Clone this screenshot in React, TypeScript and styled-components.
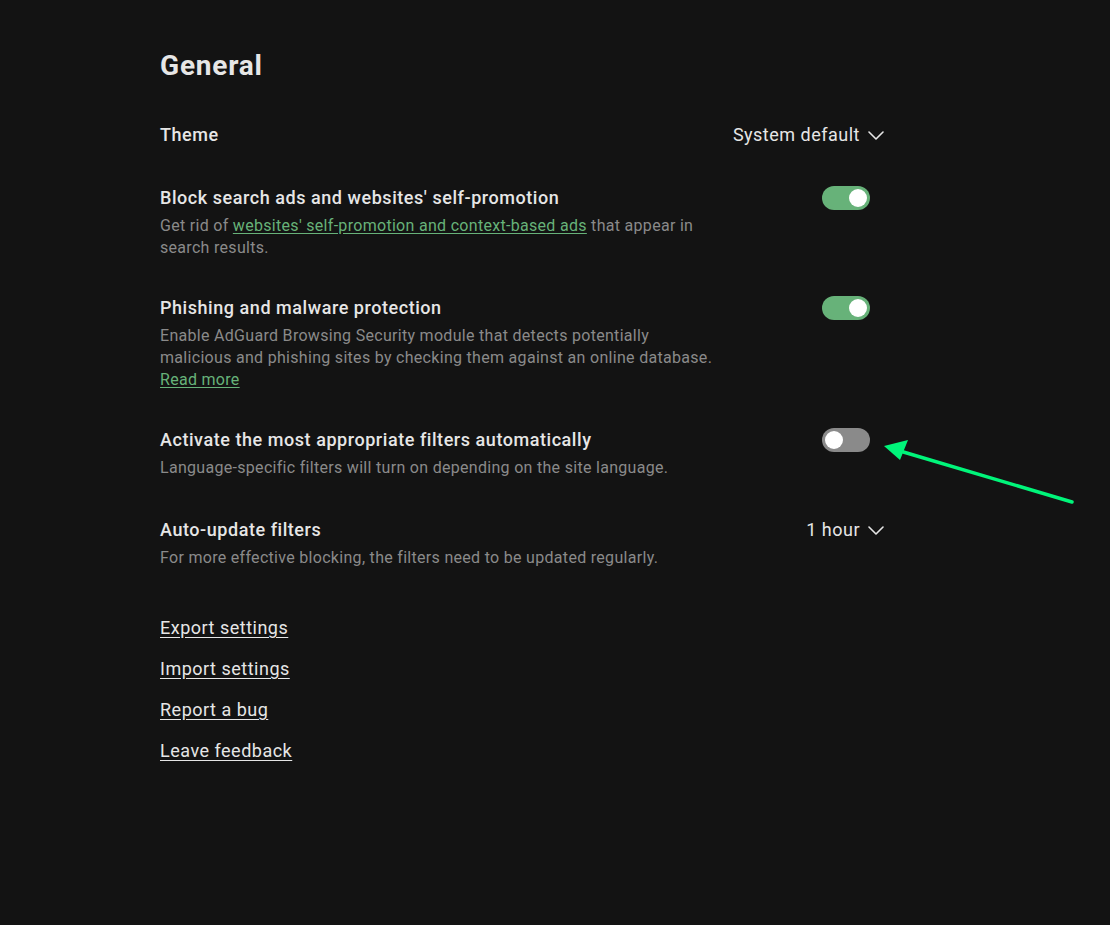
import React, { useState } from "react";
import styled, { createGlobalStyle } from "styled-components";

const GlobalStyle = createGlobalStyle`
  html, body {
    margin: 0;
    padding: 0;
    background: #131313;
  }
  body {
    font-family: Roboto, "Liberation Sans", Arial, sans-serif;
    color: #e3e3e3;
  }
`;

const Page = styled.div`
  position: relative;
  min-height: 925px;
  padding: 48px 0 0 160px;
  box-sizing: border-box;
`;

const Content = styled.div`
  width: 724px;
  display: flex;
  flex-direction: column;
`;

const Title = styled.h1`
  margin: 0 0 39px;
  font-size: 28px;
  line-height: 36px;
  font-weight: 700;
  letter-spacing: 0.8px;
  color: #e6e6e6;
`;

const Row = styled.div<{ $gap?: number }>`
  display: flex;
  justify-content: space-between;
  align-items: flex-start;
  margin-bottom: ${({ $gap }) => $gap ?? 37}px;
`;

const TextCol = styled.div`
  width: 558px;
  display: flex;
  flex-direction: column;
`;

const RowTitle = styled.div`
  font-size: 18px;
  line-height: 24px;
  font-weight: 500;
  letter-spacing: 0.55px;
  color: #e6e6e6;
`;

const Desc = styled.div`
  margin-top: 5px;
  font-size: 16px;
  line-height: 22px;
  letter-spacing: 0.3px;
  color: #8a8a8a;
`;

const GreenLink = styled.a`
  color: #67b279;
  text-decoration: underline;
  text-underline-offset: 2px;
  cursor: pointer;
`;

const SelectBtn = styled.button`
  display: flex;
  align-items: center;
  gap: 8px;
  padding: 0;
  border: none;
  background: none;
  font-family: inherit;
  font-size: 18px;
  line-height: 24px;
  letter-spacing: 0.5px;
  color: #e6e6e6;
  cursor: pointer;
`;

const ToggleTrack = styled.button<{ $on: boolean }>`
  position: relative;
  width: 48px;
  height: 24px;
  margin-right: 14px;
  padding: 0;
  border: none;
  border-radius: 12px;
  background: ${({ $on }) => ($on ? "#67b279" : "#8a8a8a")};
  cursor: pointer;
  flex-shrink: 0;
`;

const Knob = styled.span<{ $on: boolean }>`
  position: absolute;
  top: 3px;
  left: ${({ $on }) => ($on ? "27px" : "3px")};
  width: 18px;
  height: 18px;
  border-radius: 50%;
  background: #fff;
`;

const Links = styled.div`
  display: flex;
  flex-direction: column;
  align-items: flex-start;
  gap: 17px;
  margin-top: 10px;
`;

const PlainLink = styled.a`
  font-size: 18px;
  line-height: 24px;
  letter-spacing: 0.5px;
  color: #e6e6e6;
  text-decoration: underline;
  text-underline-offset: 3px;
  cursor: pointer;
`;

const Arrow = styled.svg`
  position: absolute;
  left: 880px;
  top: 438px;
  pointer-events: none;
`;

const Chevron = () => (
  <svg width="16" height="9" viewBox="0 0 16 9" fill="none">
    <path d="M1 1l7 7 7-7" stroke="#e6e6e6" strokeWidth="1.6" strokeLinecap="round" strokeLinejoin="round" />
  </svg>
);

const Toggle: React.FC<{ initial: boolean }> = ({ initial }) => {
  const [on, setOn] = useState(initial);
  return (
    <ToggleTrack $on={on} onClick={() => setOn(!on)}>
      <Knob $on={on} />
    </ToggleTrack>
  );
};

const App: React.FC = () => {
  return (
    <Page>
      <GlobalStyle />
      <Content>
        <Title>General</Title>
        <Row $gap={39}>
          <RowTitle>Theme</RowTitle>
          <SelectBtn>
            System default <Chevron />
          </SelectBtn>
        </Row>
        <Row>
          <TextCol>
            <RowTitle>Block search ads and websites' self-promotion</RowTitle>
            <Desc>
              Get rid of <GreenLink>websites' self-promotion and context-based ads</GreenLink> that appear in search results.
            </Desc>
          </TextCol>
          <Toggle initial={true} />
        </Row>
        <Row>
          <TextCol>
            <RowTitle>Phishing and malware protection</RowTitle>
            <Desc>
              Enable AdGuard Browsing Security module that detects potentially malicious and phishing sites by checking them against an online database.
              <br />
              <GreenLink>Read more</GreenLink>
            </Desc>
          </TextCol>
          <Toggle initial={true} />
        </Row>
        <Row $gap={39}>
          <TextCol>
            <RowTitle>Activate the most appropriate filters automatically</RowTitle>
            <Desc>Language-specific filters will turn on depending on the site language.</Desc>
          </TextCol>
          <Toggle initial={false} />
        </Row>
        <Row>
          <TextCol>
            <RowTitle>Auto-update filters</RowTitle>
            <Desc>For more effective blocking, the filters need to be updated regularly.</Desc>
          </TextCol>
          <SelectBtn>
            1 hour <Chevron />
          </SelectBtn>
        </Row>
        <Links>
          <PlainLink>Export settings</PlainLink>
          <PlainLink>Import settings</PlainLink>
          <PlainLink>Report a bug</PlainLink>
          <PlainLink>Leave feedback</PlainLink>
        </Links>
      </Content>
      <Arrow width="200" height="70" viewBox="0 0 200 70">
        <line x1="192" y1="64" x2="20" y2="13" stroke="#00f57a" strokeWidth="3.5" strokeLinecap="round" />
        <polygon points="4,8 28,2 20,22" fill="#00f57a" />
      </Arrow>
    </Page>
  );
};

export default App;
